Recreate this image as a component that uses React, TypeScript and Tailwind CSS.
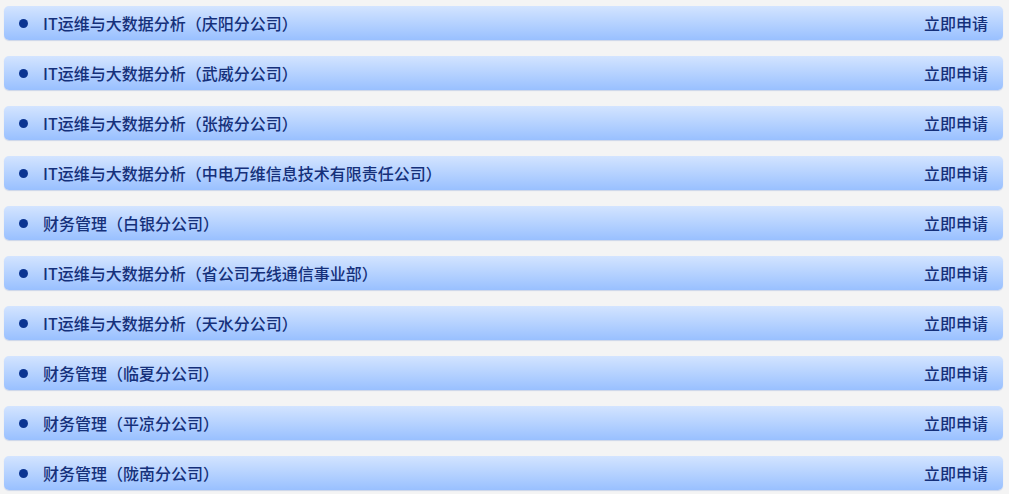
const jobs = [
  "IT运维与大数据分析（庆阳分公司）",
  "IT运维与大数据分析（武威分公司）",
  "IT运维与大数据分析（张掖分公司）",
  "IT运维与大数据分析（中电万维信息技术有限责任公司）",
  "财务管理（白银分公司）",
  "IT运维与大数据分析（省公司无线通信事业部）",
  "IT运维与大数据分析（天水分公司）",
  "财务管理（临夏分公司）",
  "财务管理（平凉分公司）",
  "财务管理（陇南分公司）",
];

const JobRow = ({ title }: { title: string }) => (
  <div className="flex h-[34px] items-center justify-between rounded-[5px] bg-gradient-to-b from-[#d3e4ff] to-[#99c0ff] pl-[15px] pr-[15px] shadow-[0_1px_1px_rgba(80,120,200,0.25)]">
    <div className="flex items-center">
      <span className="h-[9px] w-[9px] rounded-full bg-[#0b3592]" />
      <span className="ml-[15px] text-[16px] font-medium text-[#15307a]">{title}</span>
    </div>
    <span className="text-[16px] font-medium text-[#15307a]">立即申请</span>
  </div>
);

export default function App() {
  return (
    <div
      className="min-h-[494px] w-full bg-[#f4f4f4] pl-[4px] pr-[6px] pt-[6px]"
      style={{ fontFamily: '"Noto Sans CJK SC", "Noto Sans", sans-serif' }}
    >
      <div className="flex flex-col gap-[16px]">
        {jobs.map((j, i) => (
          <JobRow key={i} title={j} />
        ))}
      </div>
    </div>
  );
}
